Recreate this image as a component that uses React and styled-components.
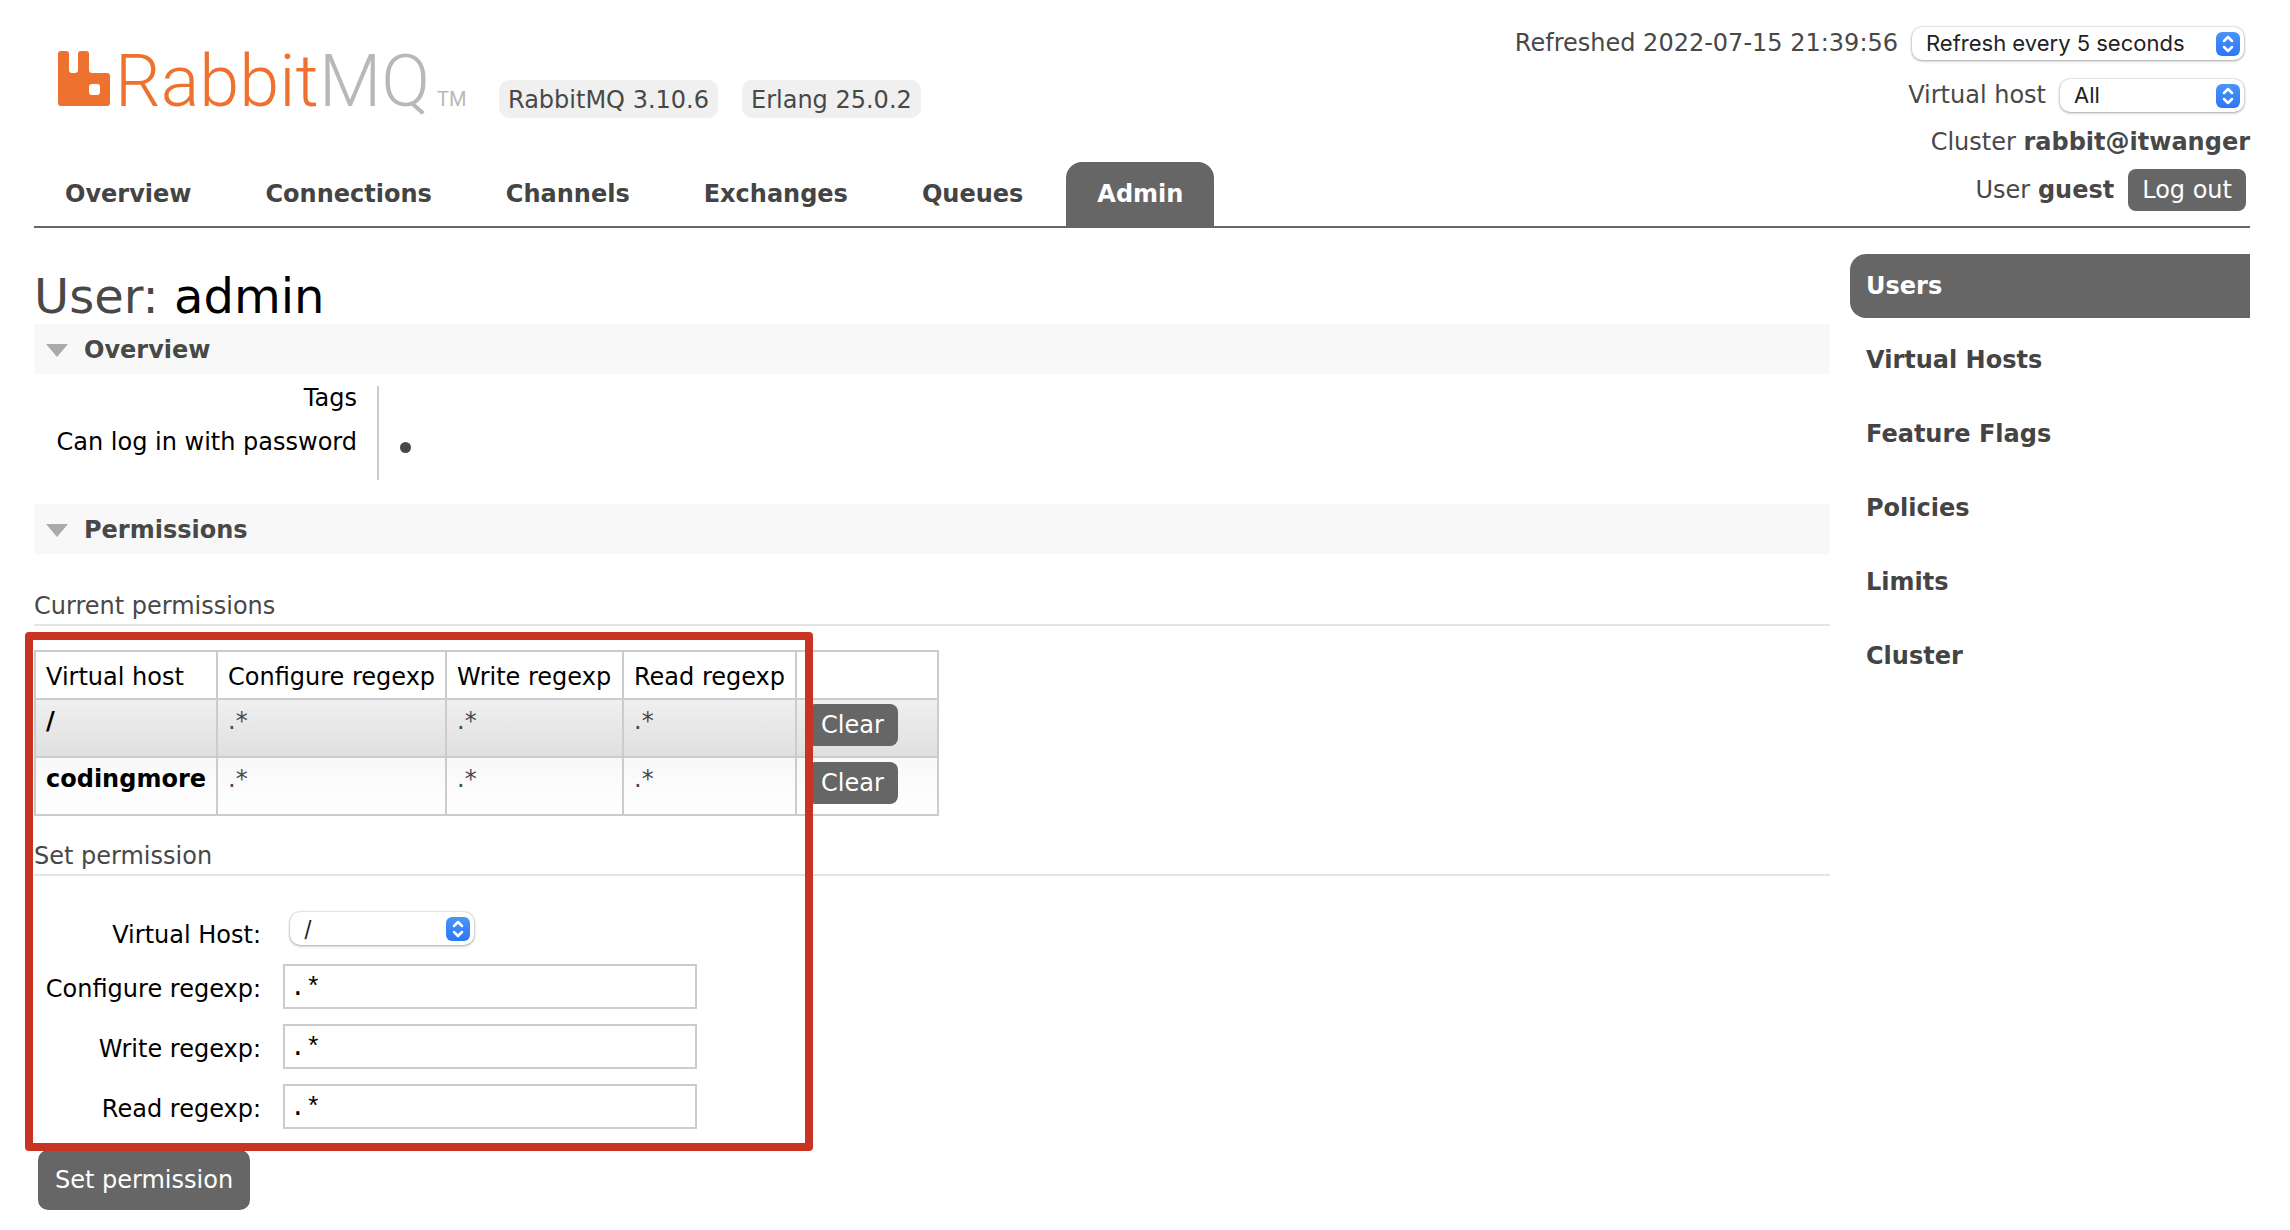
import React from 'react';
import styled, { createGlobalStyle, css } from 'styled-components';

const tabs = ['Overview', 'Connections', 'Channels', 'Exchanges', 'Queues', 'Admin'];

const adminPages = [
  'Users',
  'Virtual Hosts',
  'Feature Flags',
  'Policies',
  'Limits',
  'Cluster'
];

const permissions = [
  { vhost: '/', configure: '.*', write: '.*', read: '.*' },
  { vhost: 'codingmore', configure: '.*', write: '.*', read: '.*' }
];

const patternFields = [
  { id: 'configure', label: 'Configure regexp:' },
  { id: 'write', label: 'Write regexp:' },
  { id: 'read', label: 'Read regexp:' }
];

const Logo = () => (
  <LogoSvg viewBox="0 0 417 78" role="img" aria-label="RabbitMQ">
    <path
      fill="#ee7130"
      fillRule="evenodd"
      d="M3 11h5a3 3 0 0 1 3 3v16a3 3 0 0 0 3 3h3a3 3 0 0 0 3-3V14a3 3 0 0 1 3-3h5a3 3 0 0 1 3 3v16a3 3 0 0 0 3 3h15a3 3 0 0 1 3 3v27a3 3 0 0 1-3 3H3a3 3 0 0 1-3-3V14a3 3 0 0 1 3-3zM34 44a3 3 0 0 0-3 3v5a3 3 0 0 0 3 3h5a3 3 0 0 0 3-3v-5a3 3 0 0 0-3-3z"
    />
    <LogoText x="57" y="66" fill="#ee7130">
      Rabbit
    </LogoText>
    <LogoText x="261" y="66" fill="#b8b8b8">
      MQ
    </LogoText>
    <TradeMark x="379" y="66" fill="#b8b8b8">
      TM
    </TradeMark>
  </LogoSvg>
);

const Dropdown = ({ id, options, wide }) => (
  <SelectBox $wide={wide}>
    <Select id={id}>
      {options.map(option => (
        <option key={option}>{option}</option>
      ))}
    </Select>
    <Stepper viewBox="0 0 24 24" aria-hidden="true">
      <defs>
        <linearGradient id={`${id}-blue`} x1="0" y1="0" x2="0" y2="1">
          <stop offset="0" stopColor="#4a95f8" />
          <stop offset="1" stopColor="#2b76f6" />
        </linearGradient>
      </defs>
      <rect width="24" height="24" rx="6" fill={`url(#${id}-blue)`} />
      <path
        d="M8 9l4-4 4 4M8 15l4 4 4-4"
        fill="none"
        stroke="#fff"
        strokeWidth="2.5"
        strokeLinecap="round"
        strokeLinejoin="round"
      />
    </Stepper>
  </SelectBox>
);

const SectionTitle = ({ children }) => (
  <SectionBar>
    <Triangle viewBox="0 0 22 13" aria-hidden="true">
      <path d="M0 0h22L11 13z" fill="#aaa" />
    </Triangle>
    {children}
  </SectionBar>
);

const App = () => {
  return (
    <Page>
      <GlobalStyle />
      <Header>
        <div>
          <Brand>
            <Logo />
            <Version>RabbitMQ 3.10.6</Version>
            <Version>Erlang 25.0.2</Version>
          </Brand>
          <Tabs>
            {tabs.map(tab => (
              <Tab key={tab} href="#" $active={tab === 'Admin'}>
                {tab}
              </Tab>
            ))}
          </Tabs>
        </div>
        <Status>
          <StatusRow $tall>
            <label htmlFor="refresh">Refreshed 2022-07-15 21:39:56</label>
            <Dropdown id="refresh" options={['Refresh every 5 seconds']} wide />
          </StatusRow>
          <StatusRow $tall>
            <label htmlFor="show-vhost">Virtual host</label>
            <Dropdown id="show-vhost" options={['All', '/', 'codingmore']} />
          </StatusRow>
          <StatusRow>
            <span>
              Cluster <b>rabbit@itwanger</b>
            </span>
          </StatusRow>
          <StatusRow>
            <span>
              User <b>guest</b>
            </span>
            <Button>Log out</Button>
          </StatusRow>
        </Status>
      </Header>

      <Columns>
        <main>
          <Title>
            User: <b>admin</b>
          </Title>
          <SectionTitle>Overview</SectionTitle>
          <Facts>
            <tbody>
              <tr>
                <th scope="row">Tags</th>
                <td />
              </tr>
              <tr>
                <th scope="row">Can log in with password</th>
                <td>
                  <Bullet />
                </td>
              </tr>
            </tbody>
          </Facts>

          <SectionTitle>Permissions</SectionTitle>
          <SubTitle $first>Current permissions</SubTitle>
          <Marked>
            <Permissions>
              <colgroup>
                <Col $width={182} />
                <Col $width={229} />
                <Col $width={177} />
                <Col $width={173} />
                <Col $width={142} />
              </colgroup>
              <thead>
                <tr>
                  <th>Virtual host</th>
                  <th>Configure regexp</th>
                  <th>Write regexp</th>
                  <th>Read regexp</th>
                  <th />
                </tr>
              </thead>
              <tbody>
                {permissions.map(row => (
                  <tr key={row.vhost}>
                    <td>
                      <Vhost href="#">{row.vhost}</Vhost>
                    </td>
                    <td>{row.configure}</td>
                    <td>{row.write}</td>
                    <td>{row.read}</td>
                    <td>
                      <Button>Clear</Button>
                    </td>
                  </tr>
                ))}
              </tbody>
            </Permissions>
            <SubTitle>Set permission</SubTitle>
            <Fields>
              <label htmlFor="vhost">Virtual Host:</label>
              <Dropdown id="vhost" options={['/', 'codingmore']} />
              {patternFields.map(field => (
                <React.Fragment key={field.id}>
                  <label htmlFor={field.id}>{field.label}</label>
                  <TextInput id={field.id} type="text" defaultValue=".*" />
                </React.Fragment>
              ))}
            </Fields>
            <Highlight />
          </Marked>
          <SubmitButton>Set permission</SubmitButton>
        </main>
        <SideNav>
          {adminPages.map(page => (
            <SideLink key={page} href="#" $active={page === 'Users'}>
              {page}
            </SideLink>
          ))}
        </SideNav>
      </Columns>
    </Page>
  );
};

const GlobalStyle = createGlobalStyle`
  * {
    box-sizing: border-box;
  }
  body {
    margin: 0;
    background: #fff;
    color: #484848;
    font: 24px/28px Verdana, 'DejaVu Sans', sans-serif;
  }
`;

const Page = styled.div`
  padding: 0 40px 20px 34px;
`;

const Header = styled.header`
  display: flex;
  justify-content: space-between;
  align-items: flex-end;
  border-bottom: 2px solid #666;
`;

const Brand = styled.div`
  display: flex;
  align-items: flex-end;
  gap: 24px;
  padding: 40px 0 44px 24px;
`;

const LogoSvg = styled.svg`
  width: 417px;
  height: 78px;
  overflow: visible;
`;

const LogoText = styled.text`
  font-family: Roboto, sans-serif;
  font-size: 72px;
  font-weight: 300;
`;

const TradeMark = styled.text`
  font-family: Roboto, sans-serif;
  font-size: 20px;
`;

const Version = styled.span`
  padding: 6px 9px 4px;
  border-radius: 10px;
  background: #f0f0f0;
`;

const Tabs = styled.nav`
  display: flex;
  gap: 12px;
`;

const Tab = styled.a`
  padding: 18px 31px;
  border-radius: 16px 16px 0 0;
  color: #444;
  font-weight: bold;
  text-decoration: none;
  ${props =>
    props.$active &&
    css`
      background: #666;
      color: #fff;
    `}
`;

const Status = styled.div`
  display: flex;
  flex-direction: column;
  align-items: flex-end;
  gap: 12px;
  padding: 23px 0 15px;
`;

const StatusRow = styled.div`
  display: flex;
  align-items: center;
  gap: 14px;
  min-height: ${props => (props.$tall ? '40px' : '30px')};
  button {
    margin-right: 4px;
  }
  > div {
    margin-right: 6px;
  }
`;

const SelectBox = styled.div`
  position: relative;
  width: ${props => (props.$wide ? '332px' : '184px')};
  height: 33px;
`;

const Select = styled.select`
  appearance: none;
  display: block;
  width: 100%;
  height: 33px;
  padding: 0 32px 0 14px;
  border: 0;
  border-radius: 10px;
  background: #fff;
  box-shadow: 0 0 2px rgba(0, 0, 0, 0.25), 0 1px 3px rgba(0, 0, 0, 0.3);
  color: #222;
  font: 22px/32px Inter, sans-serif;
`;

const Stepper = styled.svg`
  position: absolute;
  top: 5px;
  right: 4px;
  width: 24px;
  height: 24px;
  pointer-events: none;
`;

const Button = styled.button`
  padding: 7px 14px;
  border: 0;
  border-radius: 8px;
  background: #666;
  color: #fff;
  font: inherit;
  line-height: 28px;
  vertical-align: top;
`;

const Columns = styled.div`
  display: grid;
  grid-template-columns: 1fr 400px;
  gap: 20px;
`;

const Title = styled.h1`
  margin: 40px 0 0;
  font-size: 48px;
  font-weight: normal;
  line-height: 56px;
  b {
    color: #000;
    font-weight: normal;
  }
`;

const SectionBar = styled.h2`
  display: flex;
  align-items: center;
  gap: 16px;
  margin: 0;
  padding: 12px 12px 10px;
  background: #f8f8f8;
  font-size: 24px;
  line-height: 28px;
`;

const Triangle = styled.svg`
  width: 22px;
  height: 13px;
`;

const Facts = styled.table`
  margin: 12px 0 24px;
  border-collapse: collapse;
  line-height: 24px;
  th {
    min-width: 344px;
    padding: 0 20px 20px 0;
    border-right: 2px solid #ccc;
    color: #000;
    font-weight: normal;
    text-align: right;
    vertical-align: top;
  }
  td {
    padding: 12px 21px 27px;
    vertical-align: top;
  }
  tr:first-child td {
    padding: 0;
  }
`;

const Bullet = styled.span`
  display: block;
  width: 11px;
  height: 11px;
  border-radius: 50%;
  background: #484848;
`;

const SubTitle = styled.h3`
  margin: ${props => (props.$first ? '38px 0 24px' : '26px 0 34px')};
  padding-bottom: 4px;
  border-bottom: 2px solid #e4e4e4;
  font-size: 24px;
  font-weight: normal;
  line-height: 28px;
`;

const Marked = styled.div`
  position: relative;
`;

const Highlight = styled.div`
  position: absolute;
  top: -18px;
  bottom: -22px;
  left: -9px;
  width: 788px;
  border: 8px solid #c93322;
  border-radius: 4px;
  pointer-events: none;
`;

const Permissions = styled.table`
  width: 905px;
  table-layout: fixed;
  border-collapse: collapse;
  th,
  td {
    border: 2px solid #ccc;
    text-align: left;
    vertical-align: top;
    white-space: nowrap;
  }
  th {
    padding: 11px 10px 7px;
    color: #000;
    font-weight: normal;
  }
  td {
    padding: 4px 10px 10px;
    line-height: 34px;
  }
  tbody tr:nth-child(odd) {
    background: linear-gradient(#f0f0f0, #dfdfdf);
  }
  tbody tr:nth-child(even) {
    background: linear-gradient(#f8f8f8, #fff);
  }
`;

const Col = styled.col`
  width: ${props => props.$width}px;
`;

const Vhost = styled.a`
  color: #000;
  font-weight: bold;
  text-decoration: none;
`;

const Fields = styled.div`
  display: grid;
  grid-template-columns: 227px 414px;
  align-items: start;
  gap: 15px 22px;
  label {
    padding-top: 11px;
    color: #000;
    text-align: right;
    white-space: nowrap;
  }
  > div {
    margin: 2px 7px;
  }
`;

const TextInput = styled.input`
  width: 100%;
  height: 45px;
  padding: 2px 5px 0;
  border: 2px solid #ccc;
  background: #fff;
  color: #000;
  font: 26px 'Liberation Mono', 'Courier New', monospace;
`;

const SubmitButton = styled(Button)`
  margin: 21px 4px 0;
  padding: 16px 17px;
  border-radius: 10px;
`;

const SideNav = styled.nav`
  display: flex;
  flex-direction: column;
  gap: 10px;
  padding-top: 26px;
`;

const SideLink = styled.a`
  padding: 18px 16px;
  border-radius: 16px 0 0 16px;
  color: #444;
  font-weight: bold;
  text-decoration: none;
  ${props =>
    props.$active &&
    css`
      background: #666;
      color: #fff;
    `}
`;

export default App;
